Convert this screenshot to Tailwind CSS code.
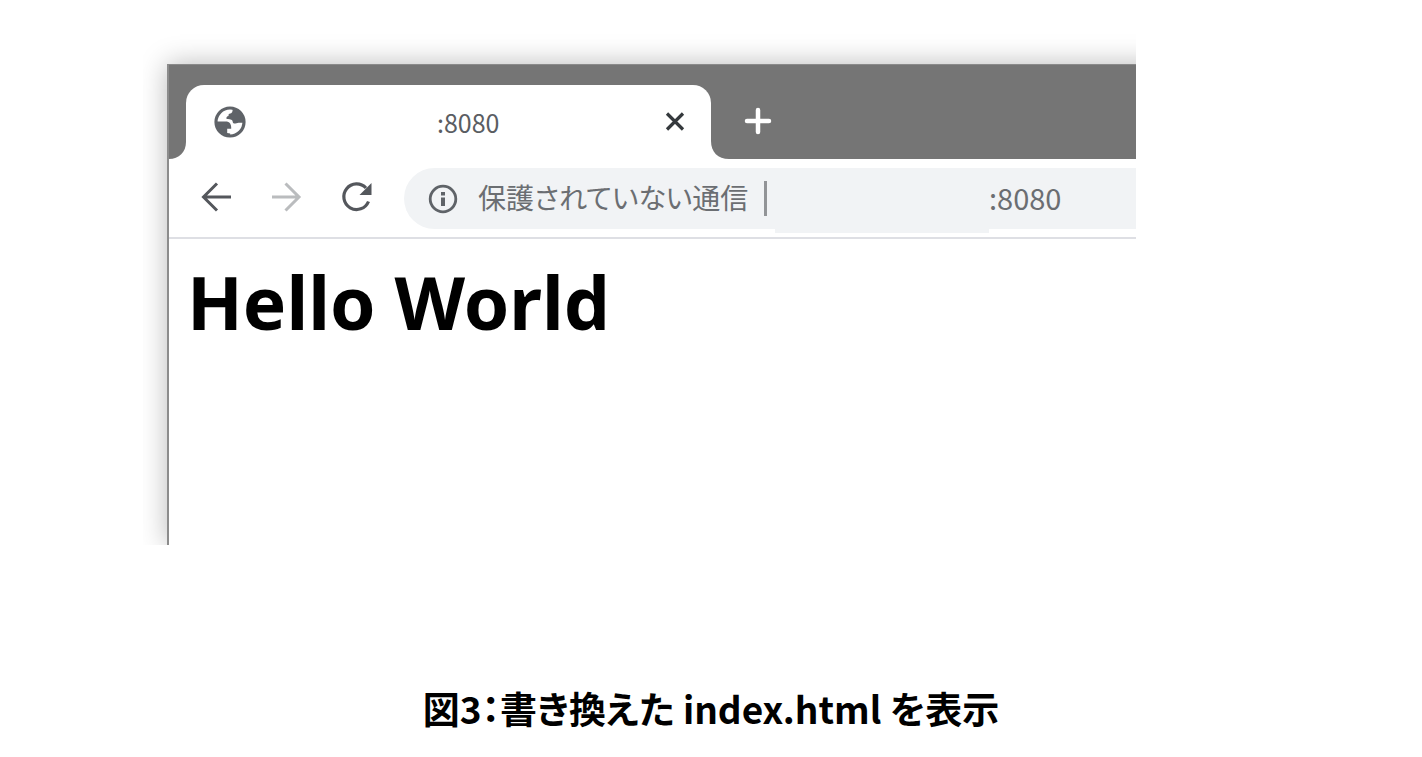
<!DOCTYPE html>
<html lang="ja">
<head>
<meta charset="utf-8">
<title>index.html</title>
<script src="https://cdn.jsdelivr.net/npm/@tailwindcss/browser@4"></script>
</head>
<body class="bg-white font-['Noto_Sans','Noto_Sans_CJK_JP',sans-serif]">
<figure class="mx-auto max-w-[1136px] pt-8">
  <div class="mr-[143px] overflow-hidden pt-8 pl-6">
    <section class="-mr-10 min-h-[481px] border-t border-l-2 border-t-[#8a8a8a] border-l-[#8c8c8c] bg-white shadow-[0_0_26px_rgba(0,0,0,0.28)]">
      <div class="flex items-end bg-[#757575] pt-5">
        <svg class="size-[17px] shrink-0" viewBox="0 0 17 17" aria-hidden="true"><path fill="#fff" d="M17 0v17H0C10 17 17 10 17 0Z"/></svg>
        <div class="flex h-[74px] w-[525px] shrink-0 items-center rounded-t-[18px] bg-white pr-6 pl-7">
          <svg class="size-8" viewBox="0 0 32 32" aria-hidden="true">
            <circle cx="16" cy="16" r="14" fill="#fff" stroke="#5f6368" stroke-width="3.200"/>
            <path fill="#5f6368" d="M18.500 2.500C19 5.500 18 7.500 15.500 7.800c-1 .2-1 1-1 2.200-1.500.3-2.500 1.200-2 2.800.5 1 4 .2 5.300 1.200 1.200 1 .7 2.700 1.700 3.300 1.500.7 3.500-.6 5-.6h4.500C30 9 25 4 18.500 2.500ZM2 15.500h10c3 0 5.200 2 5.200 6v1.300h-4V27l3 .5V30h-4C7 29 2 23 2 15.500Z"/>
          </svg>
          <h2 class="ml-[191px] font-['Noto_Sans_CJK_JP',sans-serif] text-[25px] leading-8 text-[#5a5d62]">:8080</h2>
          <button type="button" aria-label="閉じる" class="ml-auto flex size-6 items-center justify-center">
            <svg class="size-6" viewBox="0 0 24 24" fill="none" stroke="#35393d" stroke-width="3.200"><path d="m4 3.500 16 16M20 3.500l-16 16"/></svg>
          </button>
        </div>
        <svg class="size-[18px] shrink-0" viewBox="0 0 18 18" aria-hidden="true"><path fill="#fff" d="M0 0v18h18C7 18 0 11 0 0Z"/></svg>
        <button type="button" aria-label="新しいタブ" class="mb-[22px] ml-[13px] flex size-8 items-center justify-center">
          <svg class="size-8" viewBox="0 0 32 32" fill="none" stroke="#fff" stroke-width="4.500" stroke-linecap="round"><path d="M16 5v22M5 16h22"/></svg>
        </button>
      </div>
      <div class="flex items-center border-b-2 border-[#dedfe4] pt-[9px] pb-2 pl-[31px]">
        <div class="mb-[3px] flex shrink-0 gap-[38px]">
          <button type="button" aria-label="戻る" class="size-8"><svg class="size-8" viewBox="0 0 32 32" fill="none" stroke="#54575c" stroke-width="3"><path d="M31 16H4M17 2.500 3.500 16 17 29.500"/></svg></button>
          <button type="button" aria-label="進む" class="size-8"><svg class="size-8" viewBox="0 0 32 32" fill="none" stroke="#babcbe" stroke-width="3"><path d="M2 16h27M15.500 2.500 29 16 15.500 29.500"/></svg></button>
          <button type="button" aria-label="再読み込み" class="size-8"><svg class="size-8" viewBox="0 0 32 32"><path fill="none" stroke="#54575c" stroke-width="3.200" d="M28.500 20.500A12.800 12.800 0 1 1 26 7"/><path fill="#54575c" d="M31.500 2v12H19.500Z"/></svg></button>
        </div>
        <div class="ml-8 flex h-[61px] min-w-0 flex-1 items-center rounded-l-full bg-[#f1f3f5] pl-6 leading-10 text-[#6b6e72]">
          <svg class="size-[30px] shrink-0" viewBox="0 0 30 30" aria-hidden="true"><circle cx="15" cy="15" r="12.800" fill="none" stroke="#5f6368" stroke-width="2.800"/><path fill="#5f6368" d="M13 8h4v3.500h-4zM13 13.500h4V22h-4z"/></svg>
          <label for="address" class="mb-1 ml-5 w-[286px] shrink-0 font-['Noto_Sans_CJK_JP',sans-serif] text-[28px] whitespace-nowrap [font-feature-settings:'palt']">保護されていない通信</label>
          <span class="h-[35px] w-[3px] shrink-0 bg-[#929497]"></span>
          <span class="-mb-1 ml-2 w-[214px] shrink-0 self-stretch bg-[#f1f3f5]"></span>
          <input id="address" type="text" value=":8080" class="mb-1 min-w-0 flex-1 bg-transparent font-['Noto_Sans_CJK_JP',sans-serif] text-[29px] outline-none">
        </div>
      </div>
      <h1 class="pt-3 pl-[18px] text-[73px] leading-[102px] font-bold text-black">Hello World</h1>
    </section>
  </div>
  <figcaption class="pt-[136px] text-center font-['Noto_Sans_CJK_JP',sans-serif] text-[37px] leading-[54px] font-bold text-black [font-feature-settings:'palt']">図3：書き換えた index.html を表示</figcaption>
</figure>
</body>
</html>
